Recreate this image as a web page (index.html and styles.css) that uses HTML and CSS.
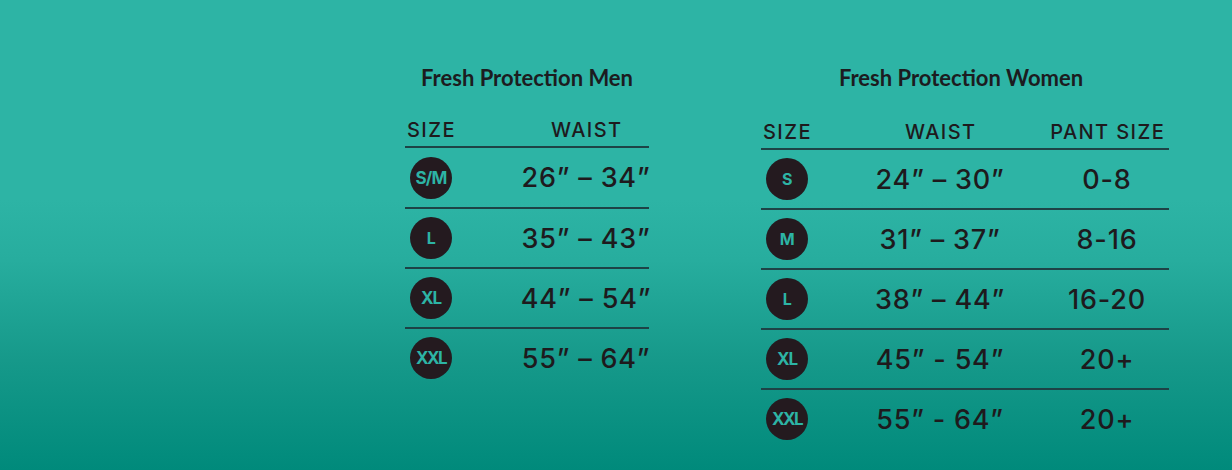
FILE: index.html
```html
<!DOCTYPE html>
<html lang="en">
<head>
<meta charset="utf-8">
<title>Fresh Protection Size Chart</title>
<link rel="stylesheet" href="styles.css">
</head>
<body>
<main class="wrap">
  <section class="chart men">
    <h2 class="title">Fresh Protection Men</h2>
    <div class="row head">
      <span class="h-size">SIZE</span>
      <span class="c">WAIST</span>
    </div>
    <div class="row">
      <span class="size"><span class="badge sm">S/M</span></span>
      <span class="c val">26” – 34”</span>
    </div>
    <div class="row">
      <span class="size"><span class="badge">L</span></span>
      <span class="c val">35” – 43”</span>
    </div>
    <div class="row">
      <span class="size"><span class="badge xl">XL</span></span>
      <span class="c val">44” – 54”</span>
    </div>
    <div class="row last">
      <span class="size"><span class="badge xxl">XXL</span></span>
      <span class="c val">55” – 64”</span>
    </div>
  </section>

  <section class="chart women">
    <h2 class="title">Fresh Protection Women</h2>
    <div class="row head">
      <span class="h-size">SIZE</span>
      <span class="c">WAIST</span>
      <span class="c">PANT SIZE</span>
    </div>
    <div class="row">
      <span class="size"><span class="badge">S</span></span>
      <span class="c val">24” – 30”</span>
      <span class="c val">0-8</span>
    </div>
    <div class="row">
      <span class="size"><span class="badge">M</span></span>
      <span class="c val">31” – 37”</span>
      <span class="c val">8-16</span>
    </div>
    <div class="row">
      <span class="size"><span class="badge">L</span></span>
      <span class="c val">38” – 44”</span>
      <span class="c val">16-20</span>
    </div>
    <div class="row">
      <span class="size"><span class="badge xl">XL</span></span>
      <span class="c val">45” - 54”</span>
      <span class="c val">20+</span>
    </div>
    <div class="row last">
      <span class="size"><span class="badge xxl">XXL</span></span>
      <span class="c val">55” - 64”</span>
      <span class="c val">20+</span>
    </div>
  </section>
</main>
</body>
</html>
```

FILE: styles.css
```css
html, body {
  margin: 0;
  padding: 0;
}
body {
  width: 1232px;
  height: 470px;
  overflow: hidden;
  background: linear-gradient(to bottom, #2db4a5 0px, #2db4a5 200px, #27ad9e 260px, #16998a 360px, #008a7b 470px);
  color: #1e1a1d;
  font-family: Inter, "Noto Sans", sans-serif;
}
.wrap {
  display: flex;
  align-items: flex-start;
  gap: 112px;
  padding: 63px 0 0 405px;
}
.chart.men { width: 244px; }
.chart.women { width: 408px; }
.title {
  margin: 0;
  text-align: center;
  font-family: Lato, sans-serif;
  font-weight: 700;
  font-size: 22px;
  line-height: 30px;
  color: #1c1c20;
}
.men .title { margin-bottom: 25px; }
.women .title { margin-bottom: 27px; padding-right: 8px; }
.row {
  display: grid;
  align-items: center;
  height: 58px;
  border-bottom: 2px solid #1d4346;
  white-space: nowrap;
}
.men .row { grid-template-columns: 118px 126px; }
.women .row { grid-template-columns: 74px 210px 124px; }
.row.head {
  height: 28px;
  align-items: start;
  font-size: 20px;
  line-height: 24px;
  font-weight: 500;
  letter-spacing: 1.4px;
}
.men .row:nth-of-type(2) { height: 59px; }
.row.last { border-bottom: none; }
.h-size { padding-left: 2px; }
.c { text-align: center; }
.row.head .c { padding-left: 1.4px; }
.val {
  font-size: 27px;
  font-weight: 500;
  letter-spacing: 0.8px;
  display: flex;
  justify-content: center;
}
.size { display: flex; padding-left: 5px; }
.badge {
  width: 42px;
  height: 42px;
  border-radius: 50%;
  background: #241a1f;
  color: #2db4a5;
  display: flex;
  align-items: center;
  justify-content: center;
  font-weight: 700;
  font-size: 16px;
  letter-spacing: -0.3px;
}
.badge.sm { font-size: 17px; letter-spacing: -0.8px; }
.badge.xl { font-size: 17px; letter-spacing: -1px; }
.badge.xxl { font-size: 17px; letter-spacing: -1.6px; }
```
